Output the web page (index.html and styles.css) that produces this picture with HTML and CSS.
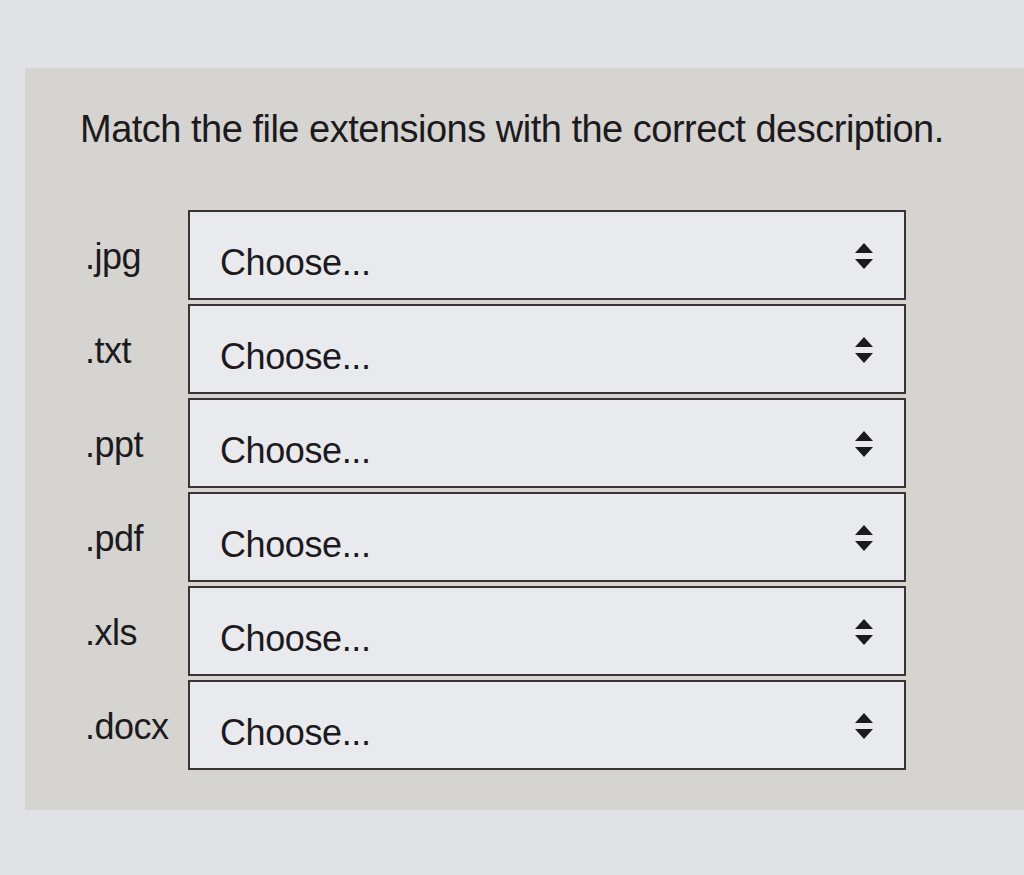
FILE: index.html
```html
<!DOCTYPE html>
<html lang="en">
<head>
    <meta charset="UTF-8">
    <meta name="viewport" content="width=device-width, initial-scale=1.0">
    <title>Match the file extensions</title>
    <link rel="stylesheet" href="styles.css">
</head>
<body>
    <div class="panel">
        <h1 class="prompt">Match the file extensions with the correct description.</h1>
        <div class="matches">
            <div class="row">
                <span class="ext">.jpg</span>
                <div class="select"><span>Choose...</span><svg class="arrows" viewBox="0 0 18 26"><path d="M9 0 L18 10 L0 10 Z"/><path d="M0 16 L18 16 L9 26 Z"/></svg></div>
            </div>
            <div class="row">
                <span class="ext">.txt</span>
                <div class="select"><span>Choose...</span><svg class="arrows" viewBox="0 0 18 26"><path d="M9 0 L18 10 L0 10 Z"/><path d="M0 16 L18 16 L9 26 Z"/></svg></div>
            </div>
            <div class="row">
                <span class="ext">.ppt</span>
                <div class="select"><span>Choose...</span><svg class="arrows" viewBox="0 0 18 26"><path d="M9 0 L18 10 L0 10 Z"/><path d="M0 16 L18 16 L9 26 Z"/></svg></div>
            </div>
            <div class="row">
                <span class="ext">.pdf</span>
                <div class="select"><span>Choose...</span><svg class="arrows" viewBox="0 0 18 26"><path d="M9 0 L18 10 L0 10 Z"/><path d="M0 16 L18 16 L9 26 Z"/></svg></div>
            </div>
            <div class="row">
                <span class="ext">.xls</span>
                <div class="select"><span>Choose...</span><svg class="arrows" viewBox="0 0 18 26"><path d="M9 0 L18 10 L0 10 Z"/><path d="M0 16 L18 16 L9 26 Z"/></svg></div>
            </div>
            <div class="row">
                <span class="ext">.docx</span>
                <div class="select"><span>Choose...</span><svg class="arrows" viewBox="0 0 18 26"><path d="M9 0 L18 10 L0 10 Z"/><path d="M0 16 L18 16 L9 26 Z"/></svg></div>
            </div>
        </div>
    </div>
</body>
</html>
```

FILE: styles.css
```css
body, html {
    margin: 0;
    padding: 0;
    width: 100%;
    height: 100%;
    overflow: hidden;
    font-family: "Liberation Sans", Arial, sans-serif;
    background-color: #e1e2e6;
    color: #1c1a1c;
}
.panel {
    margin: 68px 0 0 25px;
    padding: 38px 0 40px 55px;
    background-color: #d5d4d0;
    width: 944px;
}
.prompt {
    margin: 0 0 58px 0;
    font-size: 38px;
    font-weight: normal;
    line-height: 46px;
    letter-spacing: -0.5px;
}
.matches {
    display: flex;
    flex-direction: column;
    gap: 4px;
}
.row {
    display: flex;
    align-items: center;
}
.ext {
    width: 108px;
    padding-left: 5px;
    box-sizing: border-box;
    font-size: 36px;
    letter-spacing: -0.5px;
    margin-top: 4px;
}
.select {
    width: 718px;
    height: 90px;
    box-sizing: border-box;
    border: 2px solid #3a3236;
    background-color: #e9eaee;
    display: flex;
    align-items: center;
    justify-content: space-between;
    padding: 16px 31px 0 30px;
    font-size: 36px;
    letter-spacing: -0.4px;
}
.arrows {
    width: 18px;
    height: 26px;
    margin-top: -14px;
    fill: #1c1a1c;
}
```
